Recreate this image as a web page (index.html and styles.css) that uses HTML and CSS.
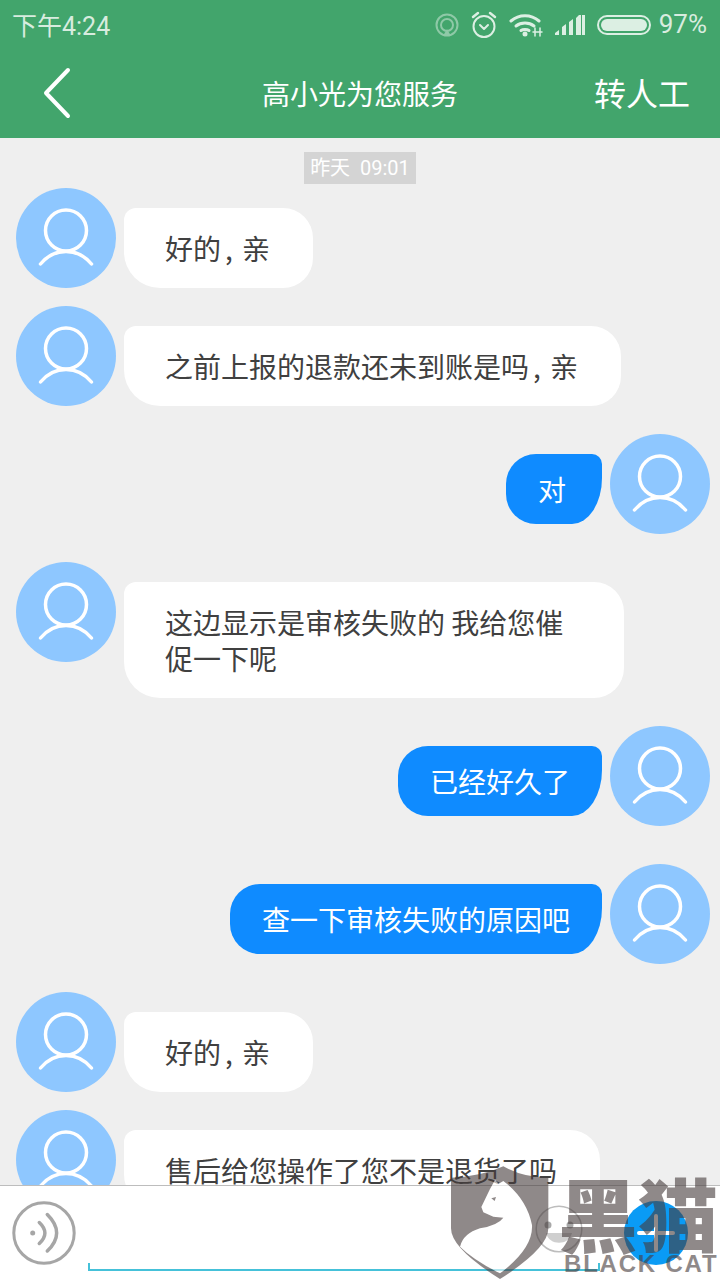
FILE: index.html
```html
<!DOCTYPE html>
<html lang="zh-CN">
<head>
    <meta charset="UTF-8">
    <meta name="viewport" content="width=device-width, initial-scale=1.0">
    <title>高小光为您服务</title>
    <link rel="stylesheet" href="styles.css">
</head>
<body>
<div class="page">

    <header class="top">
        <div class="status-bar">
            <span class="clock">下午4:24</span>
            <div class="status-icons">
                <svg class="sync-icon" width="24" height="26" viewBox="0 0 24 26" fill="none" stroke="#fff">
                    <circle cx="12" cy="13" r="10.5" stroke-width="2"/>
                    <circle cx="12" cy="13" r="6" stroke-width="2"/>
                    <path d="M12 17l4 7H8z" fill="#fff" stroke="none"/>
                </svg>
                <svg width="26" height="28" viewBox="0 0 26 28" fill="none" stroke="#dcefe3" stroke-width="2">
                    <circle cx="13" cy="15.5" r="10.5"/>
                    <path d="M9 14l4 4 4-4" stroke-linecap="round" stroke-linejoin="round"/>
                    <path d="M2 6l5-4M24 6l-5-4" stroke-width="2.5" stroke-linecap="round"/>
                </svg>
                <svg width="34" height="24" viewBox="0 0 34 24" fill="none" stroke="#dcefe3" stroke-width="3" stroke-linecap="round">
                    <path d="M2 8c8-7 20-7 28 0"/>
                    <path d="M7 13c5-4 13-4 18 0"/>
                    <path d="M12 17.500c2-1.500 6-1.500 8 0"/>
                    <circle cx="16" cy="21" r="2.500" fill="#dcefe3" stroke="none"/>
                    <path d="M26 15v8M31 15v8" stroke-width="1.500"/>
                    <path d="M24 19h9" stroke-width="1.500"/>
                </svg>
                <svg width="30" height="20" viewBox="0 0 30 20" fill="#dcefe3">
                    <path d="M0 20v-2l4-3v5zM7 20v-8l4-3v11zM14 20V7l4-3v16zM21 20V3l3-3h2v20z"/>
                    <rect x="27" y="0" width="3" height="20"/>
                </svg>
                <svg width="54" height="20" viewBox="0 0 54 20" fill="none">
                    <rect x="1" y="1" width="52" height="18" rx="9" stroke="#dcefe3" stroke-width="2"/>
                    <rect x="4" y="4" width="46" height="12" rx="6" fill="#dcefe3"/>
                </svg>
            </div>
            <span class="battery-text">97%</span>
        </div>
        <nav class="nav-bar">
            <svg class="back-icon" width="30" height="52" viewBox="0 0 30 52" fill="none" stroke="#fff" stroke-width="4" stroke-linecap="round" stroke-linejoin="round">
                <path d="M26 3L4 26l22 23"/>
            </svg>
            <h1 class="nav-title">高小光为您服务</h1>
            <span class="nav-action">转人工</span>
        </nav>
    </header>

    <main class="messages">
        <div class="time-row"><span class="time-label">昨天&nbsp;&nbsp;09:01</span></div>

        <div class="msg msg-in">
            <svg class="avatar" viewBox="0 0 100 100" fill="none"><use href="#person"/></svg>
            <div class="bubble">好的<span class="comma">,</span> 亲</div>
        </div>

        <div class="msg msg-in">
            <svg class="avatar" viewBox="0 0 100 100" fill="none"><use href="#person"/></svg>
            <div class="bubble">之前上报的退款还未到账是吗<span class="comma">,</span> 亲</div>
        </div>

        <div class="msg msg-out">
            <div class="bubble">对</div>
            <svg class="avatar" viewBox="0 0 100 100" fill="none"><use href="#person"/></svg>
        </div>

        <div class="msg msg-in">
            <svg class="avatar" viewBox="0 0 100 100" fill="none"><use href="#person"/></svg>
            <div class="bubble">这边显示是审核失败的 我给您催促一下呢</div>
        </div>

        <div class="msg msg-out">
            <div class="bubble">已经好久了</div>
            <svg class="avatar" viewBox="0 0 100 100" fill="none"><use href="#person"/></svg>
        </div>

        <div class="msg msg-out">
            <div class="bubble">查一下审核失败的原因吧</div>
            <svg class="avatar" viewBox="0 0 100 100" fill="none"><use href="#person"/></svg>
        </div>

        <div class="msg msg-in">
            <svg class="avatar" viewBox="0 0 100 100" fill="none"><use href="#person"/></svg>
            <div class="bubble">好的<span class="comma">,</span> 亲</div>
        </div>

        <div class="msg msg-in">
            <svg class="avatar" viewBox="0 0 100 100" fill="none"><use href="#person"/></svg>
            <div class="bubble">售后给您操作了您不是退货了吗</div>
        </div>
    </main>

    <footer class="composer">
        <svg class="voice-btn" width="64" height="64" viewBox="0 0 64 64" fill="none" stroke="#a6a6a6" stroke-width="3" stroke-linecap="round">
            <circle cx="32" cy="32" r="30.200"/>
            <circle cx="20.700" cy="32" r="2.500" fill="#a6a6a6" stroke="none"/>
            <path d="M27.300 21.500Q38.500 32 27.300 42.500" stroke-width="3.500"/>
            <path d="M35.300 13.500Q54 32 35.300 50" stroke-width="3.500"/>
        </svg>
        <div class="input-line">
            <svg class="smiley" width="48" height="48" viewBox="0 0 48 48" fill="none" stroke="#bdbdbd" stroke-width="1.500">
                <circle cx="24" cy="24" r="22.800"/>
                <circle cx="13" cy="20" r="3.500" fill="#a8a8a8" stroke="none"/>
                <circle cx="35" cy="20" r="3.500" fill="#a8a8a8" stroke="none"/>
                <path d="M11 28c3 13 23 13 26 0z" fill="#cfcfcf" stroke="none"/>
            </svg>
        </div>
        <svg class="plus-btn" width="64" height="64" viewBox="0 0 64 64">
            <circle cx="32" cy="32" r="32" fill="#0a9bf5"/>
            <path d="M15 32h34M32 15v34" stroke="#fff" stroke-width="4" stroke-linecap="round"/>
        </svg>
    </footer>

    <div class="watermark">
        <svg class="wm-shield" width="130" height="115" viewBox="0 0 390 345">
            <path d="M33 38Q120 36 190 4Q250 38 325 38L325 190Q325 250 180 342Q33 250 33 190Z" fill="#463c3c"/>
            <path d="M165 45L176 56L190 48L205 60Q262 110 276 180Q280 250 180 325Q100 285 60 245Q70 205 120 190Q175 180 190 158L160 155L130 142L124 126L150 72Z" fill="#fff"/>
            <path d="M154 100l14-4-4 12z" fill="#463c3c"/>
        </svg>
        <div class="wm-text">
            <span class="wm-cn">黑猫</span>
            <span class="wm-en">BLACK CAT</span>
        </div>
    </div>

    <svg class="defs" width="0" height="0">
        <defs>
            <g id="person">
                <circle cx="50" cy="50" r="50" fill="#8ec7ff"/>
                <circle cx="50" cy="42.500" r="20.500" stroke="#fff" stroke-width="3.500"/>
                <path d="M24.500 76C32 67 41 63.500 50 63.500S68 67 75.500 76" stroke="#fff" stroke-width="3.500" stroke-linecap="round"/>
            </g>
        </defs>
    </svg>

</div>
</body>
</html>
```

FILE: styles.css
```css
* {
    box-sizing: border-box;
}

body {
    margin: 0;
    font-family: Roboto, "Noto Sans CJK SC", sans-serif;
    background-color: #efefef;
}

.page {
    position: relative;
    width: 720px;
    height: 1280px;
    overflow: hidden;
    display: flex;
    flex-direction: column;
}

/* green header */
.top {
    height: 138px;
    flex-shrink: 0;
    background-color: #42a56c;
    color: #fff;
}

.status-bar {
    height: 50px;
    display: flex;
    align-items: center;
    padding: 0 13px 0 12px;
    color: #d8ecdf;
}

.clock {
    font-size: 25px;
    margin-top: -2px;
}

.status-icons {
    margin-left: auto;
    display: flex;
    align-items: center;
    gap: 12px;
}

.sync-icon {
    opacity: 0.4;
}

.battery-text {
    margin-left: 8px;
    font-size: 26px;
    margin-top: -2px;
}

.nav-bar {
    height: 88px;
    display: grid;
    grid-template-columns: 1fr auto 1fr;
    align-items: center;
    padding: 0 30px;
}

.back-icon {
    display: block;
    margin-left: 12px;
    margin-top: -2px;
}

.nav-title {
    margin: -2px 0 0;
    font-size: 28px;
    font-weight: normal;
}

.nav-action {
    justify-self: end;
    font-size: 32px;
    margin-top: -5px;
}

/* chat list */
.messages {
    flex: 1;
    min-height: 0;
    overflow: hidden;
    display: flex;
    flex-direction: column;
    font-family: "Noto Sans CJK SC", sans-serif;
}

.time-row {
    display: flex;
    flex-shrink: 0;
    justify-content: center;
    padding-top: 14px;
    margin-bottom: 4px;
}

.time-label {
    height: 32px;
    line-height: 32px;
    padding: 0 6px;
    font-family: Roboto, "Noto Sans CJK SC", sans-serif;
    font-size: 20px;
    color: #fff;
    background-color: #d4d4d4;
}

.msg {
    display: flex;
    flex-shrink: 0;
    align-items: flex-start;
    gap: 8px;
}

.msg-in {
    padding-left: 16px;
    margin-bottom: 18px;
}

.msg-out {
    justify-content: flex-end;
    padding-right: 10px;
    margin-top: 10px;
    margin-bottom: 28px;
}

.avatar {
    width: 100px;
    height: 100px;
    flex-shrink: 0;
}

.bubble {
    margin-top: 20px;
    font-size: 28px;
    line-height: 36px;
}

.msg-in .bubble {
    max-width: 500px;
    padding: 22px 43px 22px 41px;
    color: #404040;
    background-color: #fff;
    border-radius: 12px 30px 30px 36px;
}

.msg-out .bubble {
    min-width: 96px;
    padding: 17px 32px;
    color: #fff;
    background-color: #0f8bff;
    border-radius: 30px 10px 30px 30px / 30px 10px 46px 30px;
}

.comma {
    margin: 0 3px 0 4px;
}

/* bottom input bar */
.composer {
    height: 95px;
    flex-shrink: 0;
    display: flex;
    align-items: center;
    padding-left: 12px;
    background-color: #fff;
    border-top: 1px solid #bdbdbd;
}

.voice-btn {
    flex-shrink: 0;
}

.input-line {
    position: relative;
    align-self: flex-end;
    width: 512px;
    height: 8px;
    margin-left: 12px;
    margin-bottom: 9px;
    border: 2px solid #45c1d9;
    border-top: none;
}

.smiley {
    position: absolute;
    left: 445px;
    bottom: 16px;
}

.plus-btn {
    flex-shrink: 0;
    margin-left: 24px;
}

/* site watermark over the corner */
.watermark {
    position: absolute;
    left: 440px;
    top: 1165px;
    width: 280px;
    height: 115px;
    display: flex;
    opacity: 0.6;
    pointer-events: none;
}

.wm-shield {
    flex-shrink: 0;
}

.wm-text {
    display: flex;
    flex-direction: column;
    gap: 1px;
    margin-left: -6px;
    padding-top: 6px;
    color: #463c3c;
}

.wm-cn {
    margin-left: -6px;
    font-family: "Noto Sans CJK SC", sans-serif;
    font-size: 80px;
    font-weight: 900;
    line-height: 80px;
    white-space: nowrap;
}

.wm-en {
    font-family: "Liberation Sans", sans-serif;
    font-size: 24px;
    font-weight: bold;
    line-height: 24px;
    letter-spacing: 1.8px;
    white-space: nowrap;
}

.defs {
    position: absolute;
}
```
